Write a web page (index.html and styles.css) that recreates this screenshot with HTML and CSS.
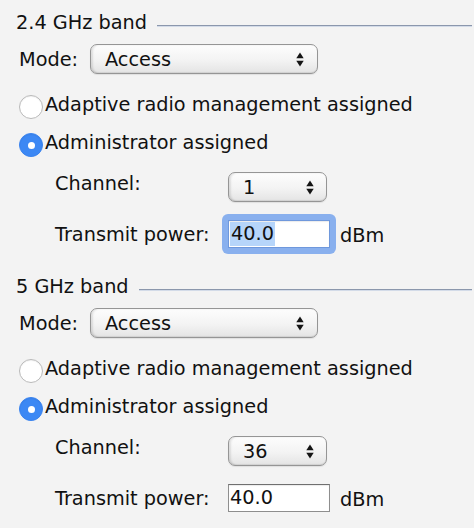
FILE: index.html
```html
<!DOCTYPE html>
<html>
<head>
<meta charset="utf-8">
<link rel="stylesheet" href="styles.css">
</head>
<body>
<div class="panel">
  <section class="band">
    <div class="band-head"><span class="band-title">2.4 GHz band</span><span class="band-rule"></span></div>
    <div class="mode-row">
      <span class="label mode-label">Mode:</span>
      <div class="select select-wide"><span class="select-value">Access</span><svg class="arrows" width="8" height="15" viewBox="0 0 8 15"><polygon points="0.3,6.3 4,0.6 7.7,6.3"/><polygon points="0.3,8.7 4,14.4 7.7,8.7"/></svg></div>
    </div>
    <div class="radio-row">
      <span class="radio"></span><span class="label radio-label">Adaptive radio management assigned</span>
    </div>
    <div class="radio-row radio-row-last">
      <span class="radio radio-on"></span><span class="label radio-label">Administrator assigned</span>
    </div>
    <div class="fields">
      <span class="label field-label">Channel:</span>
      <div class="select select-narrow"><span class="select-value">1</span><svg class="arrows" width="8" height="15" viewBox="0 0 8 15"><polygon points="0.3,6.3 4,0.6 7.7,6.3"/><polygon points="0.3,8.7 4,14.4 7.7,8.7"/></svg></div>
      <span></span>
      <span class="label field-label field-label-tx">Transmit power:</span>
      <div class="focus-ring"><div class="textbox textbox-focus"><span class="sel">40.0</span></div></div>
      <span class="label unit">dBm</span>
    </div>
  </section>
  <section class="band band-second">
    <div class="band-head"><span class="band-title">5 GHz band</span><span class="band-rule"></span></div>
    <div class="mode-row">
      <span class="label mode-label">Mode:</span>
      <div class="select select-wide"><span class="select-value">Access</span><svg class="arrows" width="8" height="15" viewBox="0 0 8 15"><polygon points="0.3,6.3 4,0.6 7.7,6.3"/><polygon points="0.3,8.7 4,14.4 7.7,8.7"/></svg></div>
    </div>
    <div class="radio-row">
      <span class="radio"></span><span class="label radio-label">Adaptive radio management assigned</span>
    </div>
    <div class="radio-row radio-row-last">
      <span class="radio radio-on"></span><span class="label radio-label">Administrator assigned</span>
    </div>
    <div class="fields">
      <span class="label field-label">Channel:</span>
      <div class="select select-narrow"><span class="select-value">36</span><svg class="arrows" width="8" height="15" viewBox="0 0 8 15"><polygon points="0.3,6.3 4,0.6 7.7,6.3"/><polygon points="0.3,8.7 4,14.4 7.7,8.7"/></svg></div>
      <span></span>
      <span class="label field-label field-label-tx">Transmit power:</span>
      <div class="plain-box"><div class="textbox">40.0</div></div>
      <span class="label unit">dBm</span>
    </div>
  </section>
</div>
</body>
</html>
```
FILE: styles.css
```css
* { box-sizing: border-box; }
html, body {
  margin: 0;
  padding: 0;
  background: #f3f3f3;
}
body {
  font-family: "DejaVu Sans", Verdana, sans-serif;
  font-size: 19.3px;
  color: #111111;
}
.panel {
  width: 472px;
  height: 525px;
  padding: 10px 0 0 16px;
  background: #f3f3f3;
}
.band {
  display: flex;
  flex-direction: column;
}
.band-second {
  margin-top: 26px;
}
.label {
  line-height: 23px;
  white-space: nowrap;
}
.band-head {
  height: 25px;
  margin-bottom: 9px;
  display: flex;
  align-items: center;
  line-height: 23px;
}
.band-rule {
  flex: 1;
  height: 1px;
  margin-left: 10px;
  margin-top: 5px;
  background: #8b97ac;
  box-shadow: 0 1px 0 #d3dbe8;
}
.mode-row {
  height: 30px;
  margin-bottom: 19px;
  display: flex;
  align-items: center;
}
.mode-label {
  margin-left: 3px;
  width: 71px;
}
.select {
  height: 30px;
  display: flex;
  align-items: center;
  justify-content: space-between;
  padding: 0 12px 0 14px;
  border: 1px solid #959595;
  border-radius: 7px;
  background: linear-gradient(#fdfdfd, #f3f3f3 55%, #e4e4e4);
  box-shadow: inset 2px 0 2px rgba(0,0,0,0.10), inset 0 -1px 1px rgba(0,0,0,0.06), 0 1px 1px rgba(0,0,0,0.08);
  line-height: 23px;
}
.select-wide { width: 228px; padding-right: 13px; }
.select-narrow { width: 99px; }
.arrows polygon { fill: #151515; }
.radio-row {
  height: 27px;
  margin-bottom: 11px;
  display: flex;
  align-items: flex-start;
}
.radio-row-last { margin-bottom: 14px; }
.radio {
  width: 24px;
  height: 24px;
  margin: 2px 0 0 3px;
  border-radius: 50%;
  background: #ffffff;
  border: 1px solid #b9b9b9;
  box-shadow: inset 0 1px 1px rgba(0,0,0,0.06);
  flex: none;
  display: flex;
  align-items: center;
  justify-content: center;
}
.radio-on {
  background: #3c88f4;
  border-color: #3a83ee;
}
.radio-on::after {
  content: "";
  width: 7px;
  height: 7px;
  border-radius: 50%;
  background: #ffffff;
}
.radio-label {
  margin-left: 2px;
}
.fields {
  margin-left: 39px;
  display: grid;
  grid-template-columns: 173px auto 1fr;
  grid-template-rows: 30px 28px;
  row-gap: 18px;
  align-items: center;
}
.field-label { align-self: start; }
.field-label-tx { align-self: center; }
.focus-ring {
  margin: -7px -6px -7px -6px;
  padding: 6px;
  border-radius: 6px;
  background: #89b0ee;
  justify-self: start;
}
.plain-box { justify-self: start; }
.textbox {
  width: 102px;
  height: 28px;
  background: #ffffff;
  border: 1px solid #8e8e8e;
  border-top-color: #6f6f6f;
  padding: 0 0 0 1px;
  line-height: 26px;
  box-shadow: inset 0 1px 1px rgba(0,0,0,0.08);
}
.textbox-focus {
  border-color: #6f98dc;
}
.sel {
  background: #b6d5fa;
  display: inline-block;
  padding: 0 1px;
  line-height: 24px;
  margin-top: 1px;
}
.unit {
  margin-left: 10px;
  padding-top: 3px;
}
```
